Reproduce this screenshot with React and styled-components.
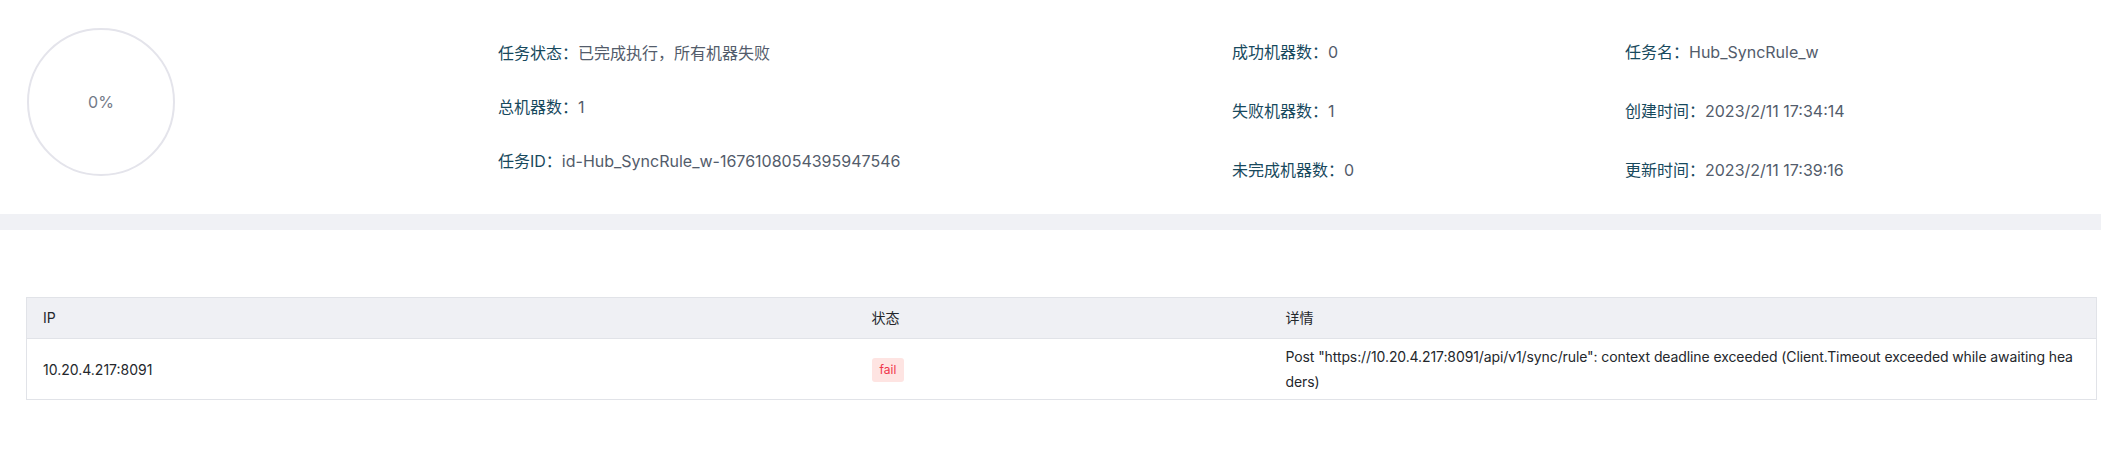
import React from "react";
import styled, { createGlobalStyle } from "styled-components";

const GlobalStyle = createGlobalStyle`
  html, body {
    margin: 0;
    padding: 0;
    background: #ffffff;
  }
  body {
    font-family: "Inter", "Noto Sans CJK SC", sans-serif;
    -webkit-font-smoothing: antialiased;
  }
`;

const Page = styled.div`
  width: 2101px;
`;

const Summary = styled.section`
  display: grid;
  grid-template-columns: 471px 734px 393px 1fr;
  height: 214px;
  padding-left: 27px;
  box-sizing: border-box;
`;

const ProgressWrap = styled.div`
  padding-top: 28px;
`;

const Progress = styled.div`
  width: 148px;
  height: 148px;
  border-radius: 50%;
  border: 2px solid #e4e4eb;
  box-sizing: border-box;
  display: flex;
  align-items: center;
  justify-content: center;
  color: #737a88;
  font-size: 16px;
`;

const InfoColumn = styled.div`
  display: flex;
  flex-direction: column;
  padding-top: ${(p) => p.$top}px;
  gap: ${(p) => p.$gap}px;
`;

const InfoItem = styled.div`
  font-size: 16px;
  line-height: 22px;
  white-space: nowrap;
`;

const Label = styled.span`
  color: #17495d;
`;

const Value = styled.span`
  color: #535c6b;
`;

const Divider = styled.div`
  height: 16px;
  background: #f0f1f5;
`;

const TableWrap = styled.div`
  padding: 67px 4px 0 26px;
`;

const Table = styled.table`
  width: 100%;
  border-collapse: collapse;
  table-layout: fixed;
  border: 1px solid #e1e3e8;
  font-size: 14px;
  color: #24272c;
`;

const Th = styled.th`
  background: #eff0f4;
  text-align: left;
  font-weight: 400;
  padding: 9px 16px;
  line-height: 22px;
  border-bottom: 1px solid #e1e3e8;
`;

const Td = styled.td`
  padding: 5px 16px;
  line-height: 25px;
  vertical-align: middle;
  word-break: break-all;
  letter-spacing: ${(p) => (p.$tight ? "-0.1px" : "normal")};
`;

const Tag = styled.span`
  display: inline-block;
  padding: 0 8px;
  height: 24px;
  line-height: 24px;
  font-size: 12px;
  border-radius: 3px;
  color: ${(p) => (p.$type === "fail" ? "#f0354b" : "#1f9d55")};
  background: ${(p) => (p.$type === "fail" ? "#fee4e2" : "#e3f7ea")};
`;

const columns = [
  {
    top: 42,
    gap: 32,
    items: [
      ["任务状态：", "已完成执行，所有机器失败"],
      ["总机器数：", "1"],
      ["任务ID：", "id-Hub_SyncRule_w-1676108054395947546"],
    ],
  },
  {
    top: 41,
    gap: 37,
    items: [
      ["成功机器数：", "0"],
      ["失败机器数：", "1"],
      ["未完成机器数：", "0"],
    ],
  },
  {
    top: 41,
    gap: 37,
    items: [
      ["任务名：", "Hub_SyncRule_w"],
      ["创建时间：", "2023/2/11 17:34:14"],
      ["更新时间：", "2023/2/11 17:39:16"],
    ],
  },
];

const rows = [
  {
    ip: "10.20.4.217:8091",
    status: "fail",
    detail:
      'Post "https://10.20.4.217:8091/api/v1/sync/rule": context deadline exceeded (Client.Timeout exceeded while awaiting headers)',
  },
];

export default function App() {
  return (
    <Page>
      <GlobalStyle />
      <Summary>
        <ProgressWrap>
          <Progress>0%</Progress>
        </ProgressWrap>
        {columns.map((col, i) => (
          <InfoColumn key={i} $top={col.top} $gap={col.gap}>
            {col.items.map(([label, value]) => (
              <InfoItem key={label}>
                <Label>{label}</Label>
                <Value>{value}</Value>
              </InfoItem>
            ))}
          </InfoColumn>
        ))}
      </Summary>
      <Divider />
      <TableWrap>
        <Table>
          <colgroup>
            <col style={{ width: 829 }} />
            <col style={{ width: 414 }} />
            <col />
          </colgroup>
          <thead>
            <tr>
              <Th>IP</Th>
              <Th>状态</Th>
              <Th>详情</Th>
            </tr>
          </thead>
          <tbody>
            {rows.map((r) => (
              <tr key={r.ip}>
                <Td>{r.ip}</Td>
                <Td>
                  <Tag $type={r.status}>{r.status}</Tag>
                </Td>
                <Td $tight>{r.detail}</Td>
              </tr>
            ))}
          </tbody>
        </Table>
      </TableWrap>
    </Page>
  );
}
